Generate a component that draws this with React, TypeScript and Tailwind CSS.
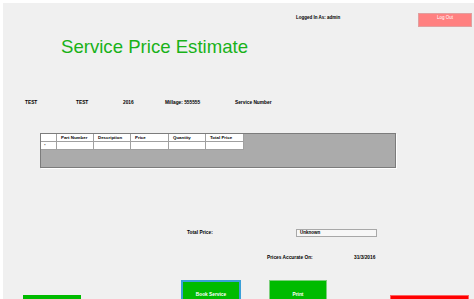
export default function App() {
  const cols = [
    { label: "", w: "w-[16px]" },
    { label: "Part Number", w: "w-[37px]" },
    { label: "Description", w: "w-[37px]" },
    { label: "Price", w: "w-[38px]" },
    { label: "Quantity", w: "w-[37px]" },
    { label: "Total Price", w: "w-[38px]" },
  ];

  return (
    <div className="w-[474px] h-[299px] overflow-hidden bg-white pt-[3px] pl-[3px] font-['Liberation_Sans',Arial,sans-serif] text-black">
      <div className="h-full bg-[#f0f0f0] flex flex-col [&>*]:shrink-0">
        {/* header */}
        <div className="flex items-start pt-[10px]">
          <span className="ml-[293px] mt-[3px] text-[4.5px] font-bold leading-none">
            Logged In As: admin
          </span>
          <button className="ml-auto mr-[2px] w-[54px] h-[14px] bg-[#ff8080] border border-[#e0a0a0] text-white text-[4.5px] leading-none flex justify-center pt-[2px]">
            Log Out
          </button>
        </div>

        {/* title */}
        <div className="mt-[11px] pl-[58px] text-[18.6px] leading-none text-[#19b219]">
          Service Price Estimate
        </div>

        {/* vehicle info */}
        <div className="mt-[44px] pl-[22px] flex text-[4.8px] font-bold leading-none">
          <span className="w-[51px]">TEST</span>
          <span className="w-[47px]">TEST</span>
          <span className="w-[42px]">2016</span>
          <span className="w-[70px]">Millage: 555555</span>
          <span>Service Number</span>
        </div>

        {/* parts grid */}
        <div className="mt-[28px] ml-[37px] w-[356px] h-[35px] bg-[#ababab] border border-[#7c7c7c] shadow-[1px_1px_0_#ffffff]">
          <div className="flex bg-white w-[203px]">
            {cols.map((c, i) => (
              <div
                key={i}
                className={`${c.w} h-[8px] border-r border-b border-[#a0a0a0] text-[4.4px] font-bold leading-none pl-[4px] pt-[1.5px]`}
              >
                {c.label}
              </div>
            ))}
          </div>
          <div className="flex bg-white w-[203px]">
            {cols.map((c, i) => (
              <div
                key={i}
                className={`${c.w} h-[8px] border-r border-b border-[#a0a0a0] text-[4.4px] leading-none pl-[3px] pt-[2px]`}
              >
                {i === 0 ? "*" : ""}
              </div>
            ))}
          </div>
        </div>

        {/* total */}
        <div className="mt-[61px] flex items-center">
          <span className="ml-[184px] w-[109px] text-[4.8px] font-bold leading-none">
            Total Price:
          </span>
          <div className="w-[81px] h-[8px] bg-[#f7f7f7] border border-[#a8a8a8] text-[4.5px] font-bold leading-none pl-[3px] pt-[1px]">
            Unknown
          </div>
        </div>

        {/* date */}
        <div className="mt-[19px] flex text-[4.8px] font-bold leading-none">
          <span className="ml-[264px] w-[87px]">Prices Accurate On:</span>
          <span>31/3/2016</span>
        </div>

        {/* buttons */}
        <div className="mt-[19px] flex items-start">
          <button className="ml-[20px] mt-[15px] w-[58px] h-[20px] bg-[#00bb00]" />
          <button className="ml-[100px] w-[60px] h-[28px] bg-[#00bb00] border-2 border-[#3a9fd8] text-white text-[4.8px] font-bold leading-none flex justify-center pt-[11px]">
            Book Service
          </button>
          <button className="ml-[28px] w-[58px] h-[28px] bg-[#00bb00] border border-[#7ccf7c] text-white text-[4.8px] font-bold leading-none flex justify-center pt-[12px]">
            Print
          </button>
          <button className="ml-[63px] mt-[15px] w-[79px] h-[20px] bg-[#ff0000] border border-[#ff6060]" />
        </div>
      </div>
    </div>
  );
}
